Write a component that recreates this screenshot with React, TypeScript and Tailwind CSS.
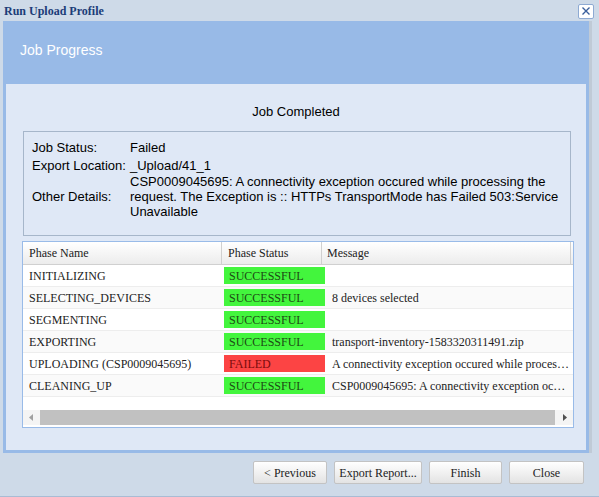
import React from 'react';

type Phase = { name: string; status: 'SUCCESSFUL' | 'FAILED'; message: string };

const phases: Phase[] = [
  { name: 'INITIALIZING', status: 'SUCCESSFUL', message: '' },
  { name: 'SELECTING_DEVICES', status: 'SUCCESSFUL', message: '8 devices selected' },
  { name: 'SEGMENTING', status: 'SUCCESSFUL', message: '' },
  { name: 'EXPORTING', status: 'SUCCESSFUL', message: 'transport-inventory-1583320311491.zip' },
  { name: 'UPLOADING (CSP0009045695)', status: 'FAILED', message: 'A connectivity exception occured while processing the request.' },
  { name: 'CLEANING_UP', status: 'SUCCESSFUL', message: 'CSP0009045695: A connectivity exception occured while processing the request.' },
];

const serif = "font-['Liberation_Serif',serif]";
const sans = "font-['Liberation_Sans',Arial,sans-serif]";

const Btn: React.FC<{ label: string; w: string }> = ({ label, w }) => (
  <button
    className={`${w} ${serif} h-[23px] rounded-[2px] border border-[#c3c3c3] bg-gradient-to-b from-[#ffffff] to-[#e3e3e3] text-[12px] text-[#222]`}
  >
    {label}
  </button>
);

export default function App() {
  return (
    <div className="w-[599px] h-[497px] bg-[#cedae8] relative overflow-hidden border-b border-[#a9bcd4]">
      {/* title bar */}
      <div className="h-[21px] flex items-center justify-between pl-[4px] pr-[5px]">
        <span className={`${serif} text-[12px] font-bold text-[#1c3d78]`}>Run Upload Profile</span>
        <span className="w-[16px] h-[15px] mt-[1px] bg-white border border-[#8eaad3] rounded-[2px] flex items-center justify-center">
          <svg width="10" height="10" viewBox="0 0 10 10">
            <path d="M1.5 1.5 L8.5 8.5 M8.5 1.5 L1.5 8.5" stroke="#3a5f9c" strokeWidth="1.4" />
          </svg>
        </span>
      </div>

      <div className="w-[589px] ml-[3px] border-r-[3px] border-[#c0cad6]">
        {/* header band */}
        <div className="h-[63px] bg-[#98bae7] flex items-center pl-[17px] pb-[4px]">
          <span className={`${sans} text-[14px] text-white`}>Job Progress</span>
        </div>

        {/* content */}
        <div className="h-[369px] bg-[#dfe8f6] border-l-[3px] border-r-[3px] border-b-[3px] border-[#98bae7] px-[14px]">
          <div className={`${sans} text-[13px] text-black text-center pt-[20px] pb-[11px] leading-[16px]`}>
            Job Completed
          </div>

          <div className={`${sans} ml-[3px] mr-[1px] h-[105px] border border-[#a6b6ca] text-[13px] text-black leading-[15px] pt-[8px] pl-[8px]`}>
            <table className="border-collapse">
              <tbody>
                <tr>
                  <td className="align-middle pb-[3px] whitespace-nowrap w-[98px]">Job Status:</td>
                  <td className="pb-[3px]">Failed</td>
                </tr>
                <tr>
                  <td className="align-middle pb-[1px] whitespace-nowrap">Export Location:</td>
                  <td className="pb-[1px]">_Upload/41_1</td>
                </tr>
                <tr>
                  <td className="align-middle whitespace-nowrap">Other Details:</td>
                  <td className="pr-[4px]">
                    CSP0009045695: A connectivity exception occured while processing the request. The Exception is :: HTTPs TransportMode has Failed 503:Service Unavailable
                  </td>
                </tr>
              </tbody>
            </table>
          </div>

          {/* grid */}
          <div className={`${serif} mt-[5px] ml-[2px] w-[552px] h-[187px] border border-[#99bbe8] bg-white flex flex-col text-[12px] text-[#222]`}>
            <div className="flex h-[23px] bg-gradient-to-b from-[#ffffff] to-[#ececec] border-b border-[#d0d0d0] shrink-0">
              <div className="w-[199px] border-r border-[#d0d0d0] pl-[6px] flex items-center">Phase Name</div>
              <div className="w-[100px] border-r border-[#d0d0d0] pl-[6px] flex items-center">Phase Status</div>
              <div className="flex-1 pl-[5px] flex items-center border-r border-[#d0d0d0] mr-[2px]">Message</div>
            </div>
            {phases.map((p, i) => (
              <div key={p.name} className={`flex h-[22px] border-b border-[#ededed] ${i % 2 === 1 ? 'bg-[#fafafa]' : 'bg-white'}`}>
                <div className="w-[199px] pl-[6px] flex items-center whitespace-nowrap">{p.name}</div>
                <div className="w-[103px] pl-[2px] py-[2px] flex">
                  <div className={`flex-1 flex items-center pl-[5px] ${p.status === 'FAILED' ? 'bg-[#fc4444] text-[#7a0c0c]' : 'bg-[#43f53d] text-[#1d4a14]'}`}>
                    {p.status}
                  </div>
                </div>
                <div className="w-[247px] pl-[7px] pr-[3px] flex items-center overflow-hidden">
                  <span className="truncate">{p.message}</span>
                </div>
              </div>
            ))}
            <div className="flex-1" />
            <div className="h-[15px] mb-[2px] flex shrink-0">
              <div className="w-[17px] bg-[#f4f4f4] flex items-center justify-center">
                <svg width="5" height="7" viewBox="0 0 5 7"><path d="M4 0 L0 3.5 L4 7 Z" fill="#a0a0a0" /></svg>
              </div>
              <div className="flex-1 bg-[#c1c1c1]" />
              <div className="w-[18px] bg-[#f4f4f4] flex items-center justify-center">
                <svg width="5" height="7" viewBox="0 0 5 7"><path d="M1 0 L5 3.5 L1 7 Z" fill="#505050" /></svg>
              </div>
            </div>
          </div>
        </div>
      </div>

      {/* buttons */}
      <div className="flex justify-end gap-[7px] pr-[15px] mt-[8px]">
        <Btn label="< Previous" w="w-[74px]" />
        <Btn label="Export Report..." w="w-[88px]" />
        <Btn label="Finish" w="w-[73px]" />
        <Btn label="Close" w="w-[75px]" />
      </div>
    </div>
  );
}
